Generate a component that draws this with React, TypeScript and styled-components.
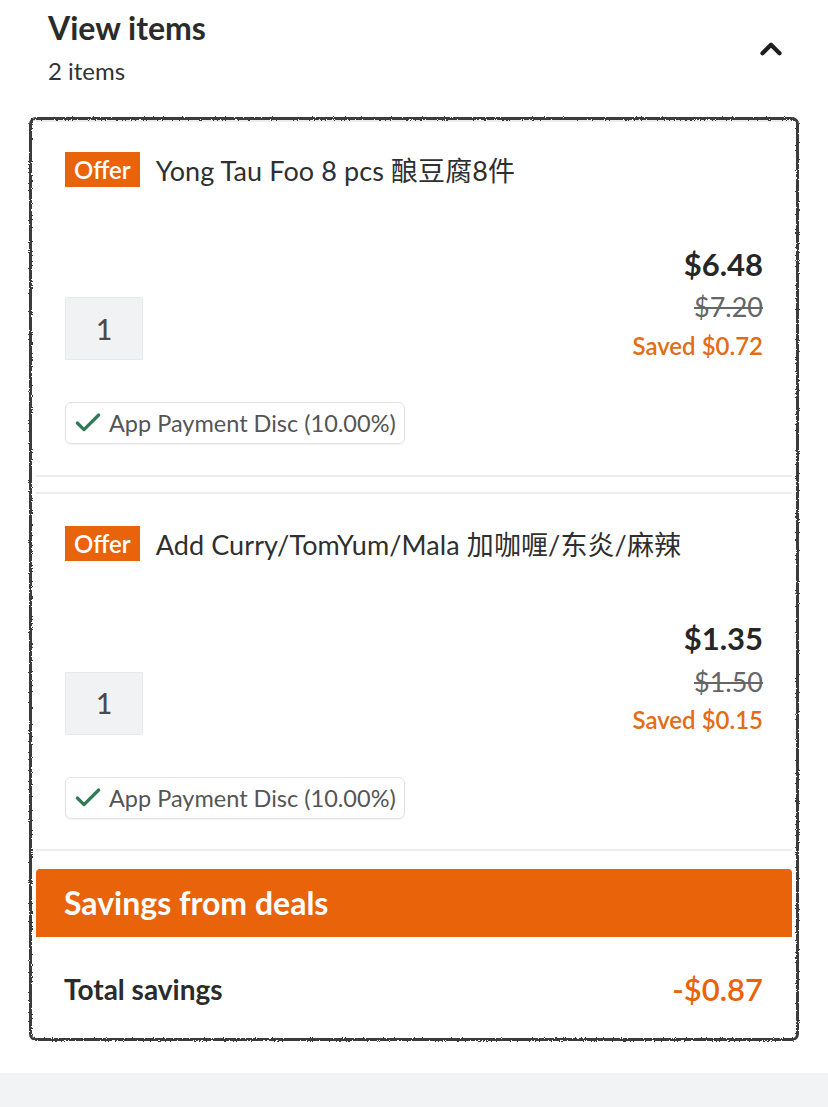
import React from "react";
import styled, { createGlobalStyle } from "styled-components";
import { Check, ChevronUp } from "lucide-react";

const GlobalStyle = createGlobalStyle`
  html, body {
    margin: 0;
    padding: 0;
    background: #ffffff;
  }
  body {
    font-family: Lato, "Noto Sans CJK SC", "Noto Sans", sans-serif;
    color: #2b2b2b;
    -webkit-font-smoothing: antialiased;
  }
  * { box-sizing: border-box; }
`;

const Page = styled.div`
  width: 828px;
  display: flex;
  flex-direction: column;
`;

const Header = styled.div`
  display: flex;
  align-items: center;
  justify-content: space-between;
  padding: 9px 40px 0 48px;
`;

const HeaderText = styled.div`
  display: flex;
  flex-direction: column;
`;

const Title = styled.h2`
  margin: 0;
  font-size: 32px;
  line-height: 38px;
  font-weight: 700;
  color: #2b2b2b;
`;

const Subtitle = styled.div`
  margin-top: 9px;
  font-size: 24px;
  line-height: 29px;
  color: #333;
`;

const Toggle = styled.button`
  border: none;
  background: none;
  padding: 0;
  margin-top: 4px;
  display: flex;
  color: #1e1e1e;
`;

const SketchBox = styled.div`
  position: relative;
  margin: 32px 29px 0;
  padding: 3px 7px 3px;
  background: #fff;

  &::before {
    content: "";
    position: absolute;
    inset: 0;
    border: 3.5px solid #3a3a3a;
    border-radius: 7px;
    filter: url(#sketchy);
    pointer-events: none;
    z-index: 2;
  }
`;

const ItemCard = styled.div`
  display: flex;
  flex-direction: column;
  padding: 28px 29px 31px;
  border-top: 2px solid #ececec;
  border-bottom: 2px solid #ececec;
  background: #fff;

  & + & {
    margin-top: 15px;
    padding: 30px 29px 30px;
  }
`;

const NameRow = styled.div`
  display: flex;
  align-items: center;
  gap: 16px;
`;

const OfferBadge = styled.span`
  display: inline-flex;
  align-items: center;
  height: 35px;
  padding: 0 9px;
  background: #e8630a;
  color: #fff;
  font-size: 24px;
  font-weight: 600;
`;

const ItemName = styled.span`
  font-size: 27px;
  letter-spacing: 0.1px;
  color: #2f2f2f;
`;

const BodyRow = styled.div`
  display: flex;
  align-items: flex-end;
  justify-content: space-between;
  margin-top: 57px;
`;

const QtyBox = styled.div`
  width: 78px;
  height: 63px;
  display: flex;
  align-items: center;
  justify-content: center;
  background: #f1f2f4;
  border: 1px solid #e7e8ea;
  border-radius: 2px;
  font-size: 28px;
  font-weight: 500;
  color: #4a4a4a;
`;

const PriceCol = styled.div`
  display: flex;
  flex-direction: column;
  align-items: flex-end;
  gap: 8px;
`;

const Price = styled.div`
  font-size: 31px;
  line-height: 1.2;
  font-weight: 700;
  color: #262626;
`;

const OldPrice = styled.div`
  font-size: 27px;
  line-height: 1.2;
  color: #666;
  text-decoration: line-through;
  text-decoration-thickness: 2px;
`;

const Saved = styled.div`
  font-size: 24px;
  line-height: 1.2;
  font-weight: 600;
  color: #e36c14;
`;

const DiscChip = styled.div`
  align-self: flex-start;
  margin-top: 42px;
  height: 42px;
  display: inline-flex;
  align-items: center;
  gap: 5px;
  padding: 0 8px 0 6px;
  border: 1px solid #e3e3e3;
  border-radius: 6px;
  box-shadow: 0 1px 2px rgba(0, 0, 0, 0.06);
  font-size: 23.5px;
  color: #555;
`;

const SavingsCard = styled.div`
  margin-top: 18px;
  display: flex;
  flex-direction: column;
`;

const SavingsBanner = styled.div`
  height: 68px;
  display: flex;
  align-items: center;
  padding: 0 28px;
  background: #e8630a;
  border-radius: 4px 4px 0 0;
  color: #fff;
  font-size: 32px;
  font-weight: 700;
`;

const TotalRow = styled.div`
  height: 101px;
  display: flex;
  align-items: center;
  justify-content: space-between;
  padding: 4px 29px 0 28px;
`;

const TotalLabel = styled.span`
  font-size: 28px;
  font-weight: 700;
  color: #2b2b2b;
`;

const TotalValue = styled.span`
  font-size: 31px;
  font-weight: 600;
  color: #e8630a;
`;

const Footer = styled.div`
  margin-top: 32px;
  height: 40px;
  background: #f2f3f5;
`;

type Item = {
  name: string;
  price: string;
  oldPrice: string;
  saved: string;
  qty: number;
};

const items: Item[] = [
  { name: "Yong Tau Foo 8 pcs 酿豆腐8件", price: "$6.48", oldPrice: "$7.20", saved: "Saved $0.72", qty: 1 },
  { name: "Add Curry/TomYum/Mala 加咖喱/东炎/麻辣", price: "$1.35", oldPrice: "$1.50", saved: "Saved $0.15", qty: 1 },
];

export default function App() {
  return (
    <>
      <GlobalStyle />
      <svg width="0" height="0" style={{ position: "absolute" }} aria-hidden="true">
        <defs>
          <filter id="sketchy" x="-2%" y="-2%" width="104%" height="104%">
            <feTurbulence type="fractalNoise" baseFrequency="0.9" numOctaves="2" seed="3" result="noise" />
            <feDisplacementMap in="SourceGraphic" in2="noise" scale="3" xChannelSelector="R" yChannelSelector="G" />
          </filter>
        </defs>
      </svg>
      <Page>
        <Header>
          <HeaderText>
            <Title>View items</Title>
            <Subtitle>2 items</Subtitle>
          </HeaderText>
          <Toggle aria-label="Collapse">
            <ChevronUp size={34} strokeWidth={3} />
          </Toggle>
        </Header>
        <SketchBox>
          {items.map((it) => (
            <ItemCard key={it.name}>
              <NameRow>
                <OfferBadge>Offer</OfferBadge>
                <ItemName>{it.name}</ItemName>
              </NameRow>
              <BodyRow>
                <QtyBox>{it.qty}</QtyBox>
                <PriceCol>
                  <Price>{it.price}</Price>
                  <OldPrice>{it.oldPrice}</OldPrice>
                  <Saved>{it.saved}</Saved>
                </PriceCol>
              </BodyRow>
              <DiscChip>
                <Check size={32} strokeWidth={2.4} color="#2e7a55" />
                App Payment Disc (10.00%)
              </DiscChip>
            </ItemCard>
          ))}
          <SavingsCard>
            <SavingsBanner>Savings from deals</SavingsBanner>
            <TotalRow>
              <TotalLabel>Total savings</TotalLabel>
              <TotalValue>-$0.87</TotalValue>
            </TotalRow>
          </SavingsCard>
        </SketchBox>
        <Footer />
      </Page>
    </>
  );
}
